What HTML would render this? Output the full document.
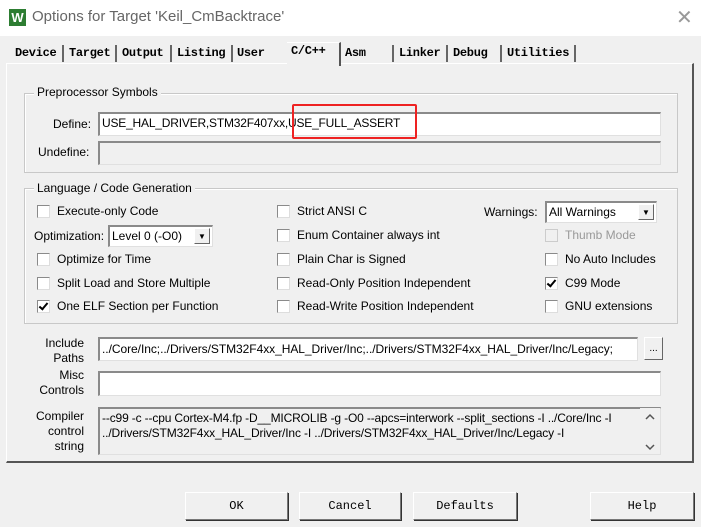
<!DOCTYPE html>
<html><head><style>
body{margin:0;width:701px;height:527px;background:#f0f0f0;font-family:"Liberation Sans",sans-serif;font-size:12px;color:#000;position:relative;overflow:hidden}
.a{position:absolute;white-space:nowrap}
.title{left:0;top:0;width:701px;height:36px;background:#fff}
.tab{font-family:"Liberation Mono","Noto Sans CJK SC",monospace;font-size:12px;top:46px;font-weight:bold;letter-spacing:-0.3px}
.grp{position:absolute;border:1px solid #c8c8c8;box-shadow:inset 1px 1px 0 #fff}
.leg{position:absolute;background:#f0f0f0;padding:0 3px}
.inp{position:absolute;background:#fff;border-top:2px solid #8a8a8a;border-left:2px solid #8a8a8a;border-bottom:1px solid #e0e0e0;border-right:1px solid #e0e0e0;box-sizing:border-box;padding:1px 2px;font-size:12px;overflow:hidden;white-space:nowrap}
.cb{position:absolute;width:11px;height:11px;background:#fff;border:1px solid #8a8a8a;border-right-color:#ddd;border-bottom-color:#ddd}
.cb.k::after{content:"";position:absolute;left:3px;top:0px;width:3px;height:7px;border:solid #000;border-width:0 2px 2px 0;transform:rotate(40deg)}
.btn{position:absolute;top:492px;height:28px;border:1px solid #fff;border-right-color:#777;border-bottom-color:#777;box-shadow:1px 1px 0 #333;box-sizing:border-box;text-align:center;line-height:26px;font-family:"Liberation Mono","Noto Sans CJK SC",monospace;font-size:12px;background:#f0f0f0}
</style></head><body>
<div class="a title"></div>
<div class="a" style="left:9px;top:9px;width:17px;height:17px;background:#2d7d32;color:#fff;font:bold 13px 'Liberation Sans';text-align:center;line-height:17px">W</div>
<div class="a" style="left:32px;top:8px;font-size:15px;color:#666">Options for Target 'Keil_CmBacktrace'</div>
<div class="a" style="left:676px;top:5px;font-size:20px;color:#999">✕</div>

<div class="a" style="left:6px;top:63px;width:688px;height:400px;border-top:1px solid #fff;border-right:2px solid #555;border-bottom:2px solid #555;border-left:1px solid #fff;box-sizing:border-box"></div>
<div class="a" style="left:287px;top:42px;width:52px;height:23px;background:#f0f0f0;border-top:1px solid #fff;border-right:2px solid #555"></div>
<div class="a tab" style="left:15px">Device</div>
<div class="a" style="left:62px;top:45px;width:2px;height:17px;background:#666"></div>
<div class="a tab" style="left:69px">Target</div>
<div class="a" style="left:115px;top:45px;width:2px;height:17px;background:#666"></div>
<div class="a tab" style="left:122px">Output</div>
<div class="a" style="left:170px;top:45px;width:2px;height:17px;background:#666"></div>
<div class="a tab" style="left:177px">Listing</div>
<div class="a" style="left:231px;top:45px;width:2px;height:17px;background:#666"></div>
<div class="a tab" style="left:237px">User</div>
<div class="a tab" style="left:291px;top:44px">C/C++</div>
<div class="a tab" style="left:345px">Asm</div>
<div class="a" style="left:392px;top:45px;width:2px;height:17px;background:#666"></div>
<div class="a tab" style="left:399px">Linker</div>
<div class="a" style="left:446px;top:45px;width:2px;height:17px;background:#666"></div>
<div class="a tab" style="left:453px">Debug</div>
<div class="a" style="left:500px;top:45px;width:2px;height:17px;background:#666"></div>
<div class="a tab" style="left:507px">Utilities</div>
<div class="a" style="left:574px;top:45px;width:2px;height:17px;background:#666"></div>

<div class="grp" style="left:24px;top:93px;width:652px;height:78px"></div>
<div class="leg" style="left:34px;top:85px">Preprocessor Symbols</div>
<div class="a" style="left:53px;top:117px">Define:</div>
<div class="inp" style="left:98px;top:112px;width:563px;height:24px;letter-spacing:-0.2px;padding-top:2px">USE_HAL_DRIVER,STM32F407xx,USE_FULL_ASSERT</div>
<div class="a" style="left:38px;top:145px">Undefine:</div>
<div class="inp" style="left:98px;top:141px;width:563px;height:24px;background:#f0f0f0"></div>
<div class="a" style="left:292px;top:104px;width:121px;height:31px;border:2px solid #e22;border-radius:2px"></div>

<div class="grp" style="left:24px;top:188px;width:652px;height:134px"></div>
<div class="leg" style="left:34px;top:181px">Language / Code Generation</div>
<div class="cb" style="left:37px;top:205px"></div><div class="a" style="left:57px;top:204px">Execute-only Code</div>
<div class="a" style="left:34px;top:229px">Optimization:</div>
<div class="inp" style="left:108px;top:225px;width:105px;height:22px;padding-top:2px">Level 0 (-O0)</div>
<div class="a" style="left:194px;top:228px;width:16px;height:16px;background:#f0f0f0;border:1px solid #fff;border-right-color:#666;border-bottom-color:#666;box-sizing:border-box;font-size:8px;text-align:center;line-height:15px">▼</div>
<div class="cb" style="left:37px;top:253px"></div><div class="a" style="left:57px;top:252px">Optimize for Time</div>
<div class="cb" style="left:37px;top:277px"></div><div class="a" style="left:57px;top:276px">Split Load and Store Multiple</div>
<div class="cb k" style="left:37px;top:300px"></div><div class="a" style="left:57px;top:299px">One ELF Section per Function</div>

<div class="cb" style="left:277px;top:205px"></div><div class="a" style="left:297px;top:204px">Strict ANSI C</div>
<div class="cb" style="left:277px;top:229px"></div><div class="a" style="left:297px;top:228px">Enum Container always int</div>
<div class="cb" style="left:277px;top:253px"></div><div class="a" style="left:297px;top:252px">Plain Char is Signed</div>
<div class="cb" style="left:277px;top:277px"></div><div class="a" style="left:297px;top:276px">Read-Only Position Independent</div>
<div class="cb" style="left:277px;top:300px"></div><div class="a" style="left:297px;top:299px">Read-Write Position Independent</div>

<div class="a" style="left:484px;top:205px">Warnings:</div>
<div class="inp" style="left:545px;top:201px;width:112px;height:22px;padding-top:2px">All Warnings</div>
<div class="a" style="left:638px;top:204px;width:16px;height:16px;background:#f0f0f0;border:1px solid #fff;border-right-color:#666;border-bottom-color:#666;box-sizing:border-box;font-size:8px;text-align:center;line-height:15px">▼</div>
<div class="cb" style="left:545px;top:229px;background:#f0f0f0;border-color:#ccc"></div><div class="a" style="left:565px;top:228px;color:#999">Thumb Mode</div>
<div class="cb" style="left:545px;top:253px"></div><div class="a" style="left:565px;top:252px">No Auto Includes</div>
<div class="cb k" style="left:545px;top:277px"></div><div class="a" style="left:565px;top:276px">C99 Mode</div>
<div class="cb" style="left:545px;top:300px"></div><div class="a" style="left:565px;top:299px">GNU extensions</div>

<div class="a" style="left:20px;top:336px;width:64px;text-align:right;line-height:15px">Include<br>Paths</div>
<div class="inp" style="left:98px;top:337px;width:540px;height:24px;padding-top:3px;letter-spacing:-0.05px">../Core/Inc;../Drivers/STM32F4xx_HAL_Driver/Inc;../Drivers/STM32F4xx_HAL_Driver/Inc/Legacy;</div>
<div class="a" style="left:644px;top:337px;width:19px;height:23px;border:1px solid #fff;border-right-color:#666;border-bottom-color:#666;box-sizing:border-box;text-align:center;font-size:10px;line-height:22px">...</div>
<div class="a" style="left:20px;top:368px;width:64px;text-align:right;line-height:15px">Misc<br>Controls</div>
<div class="inp" style="left:98px;top:371px;width:563px;height:25px"></div>
<div class="a" style="left:20px;top:409px;width:64px;text-align:right;line-height:15px">Compiler<br>control<br>string</div>
<div class="inp" style="left:98px;top:407px;width:563px;height:48px;background:#f0f0f0;line-height:15px;padding-top:2px;letter-spacing:-0.15px">--c99 -c --cpu Cortex-M4.fp -D__MICROLIB -g -O0 --apcs=interwork --split_sections -I ../Core/Inc -I<br>../Drivers/STM32F4xx_HAL_Driver/Inc -I ../Drivers/STM32F4xx_HAL_Driver/Inc/Legacy -I</div>
<div class="a" style="left:640px;top:408px;width:20px;height:46px;background:#f0f0f0"></div>
<svg class="a" style="left:645px;top:413px" width="10" height="40"><path d="M1 6 L5 2 L9 6" fill="none" stroke="#555" stroke-width="1.5"/><path d="M1 32 L5 36 L9 32" fill="none" stroke="#555" stroke-width="1.5"/></svg>

<div class="btn" style="left:185px;width:103px">OK</div>
<div class="btn" style="left:299px;width:102px">Cancel</div>
<div class="btn" style="left:413px;width:104px">Defaults</div>
<div class="btn" style="left:590px;width:104px">Help</div>
</body></html>
